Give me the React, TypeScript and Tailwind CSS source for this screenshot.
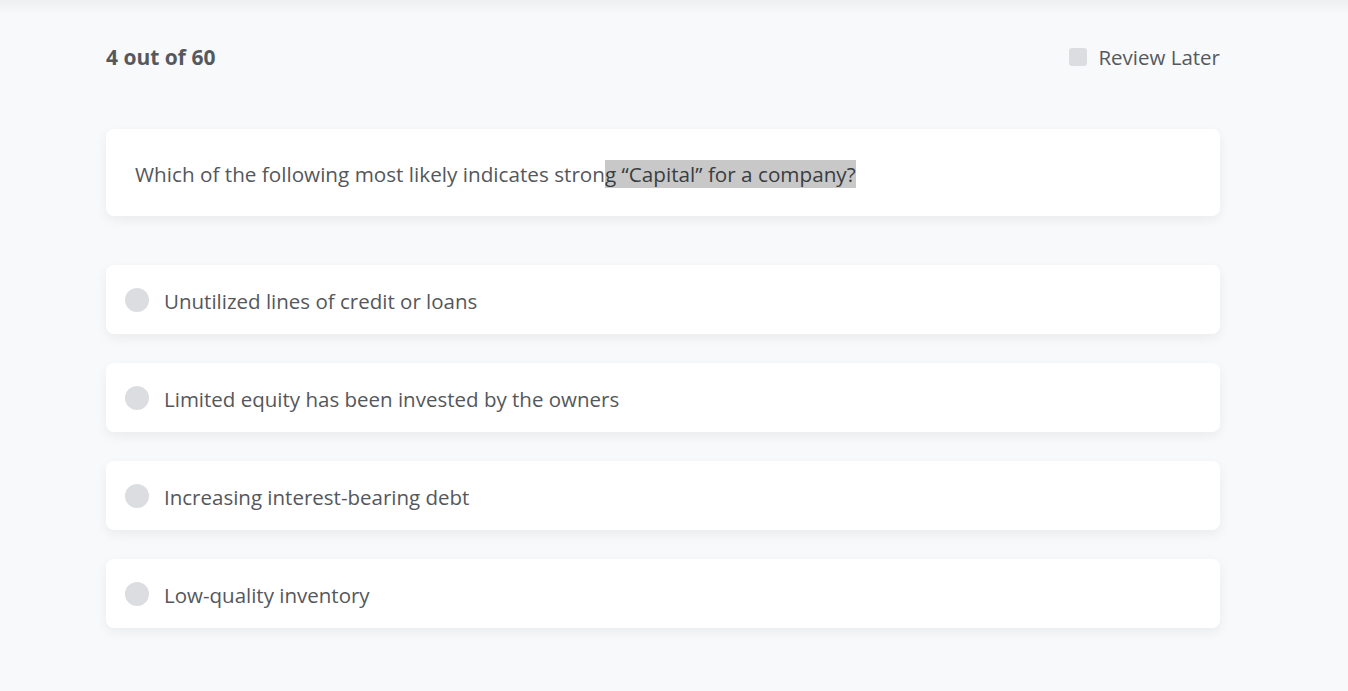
import React from "react";

const options = [
  "Unutilized lines of credit or loans",
  "Limited equity has been invested by the owners",
  "Increasing interest-bearing debt",
  "Low-quality inventory",
];

export default function App() {
  return (
    <div
      className="min-h-[691px] w-full bg-[#f8f9fa] text-[#54575b]"
      style={{ fontFamily: '"Open Sans", "Noto Sans", sans-serif' }}
    >
      <div className="h-[14px] bg-gradient-to-b from-[#eeeff1] to-[#f8f9fa]" />
      <div className="ml-[106px] w-[1114px] pt-[27px]">
        <div className="flex items-center justify-between h-[32px]">
          <div className="text-[21px] font-bold text-[#55595e] pt-[1px]">4 out of 60</div>
          <label className="flex items-center gap-[11px] text-[20.5px] text-[#55595e]">
            <span className="block h-[18px] w-[18px] rounded-[3px] bg-[#dcdde0]" />
            <span>Review Later</span>
          </label>
        </div>
        <div className="mt-[56px] flex h-[87px] items-center rounded-[8px] bg-white px-[29px] pt-[3px] shadow-[0_4px_12px_rgba(0,0,0,0.06)]">
          <p className="text-[20.7px] leading-[31px]">
            Which of the following most likely indicates stron
            <span className="bg-[#c8c8c8] text-[#3a3d40]">g “Capital” for a company?</span>
          </p>
        </div>
        <div className="mt-[49px] flex flex-col gap-[29px]">
          {options.map((o) => (
            <div
              key={o}
              className="flex h-[69px] items-center gap-[15px] rounded-[8px] bg-white pl-[19px] shadow-[0_4px_12px_rgba(0,0,0,0.06)]"
            >
              <span className="block h-[24px] w-[24px] rounded-full bg-[#dcdde0]" />
              <span className="text-[20.5px] pt-[3px]">{o}</span>
            </div>
          ))}
        </div>
      </div>
    </div>
  );
}
